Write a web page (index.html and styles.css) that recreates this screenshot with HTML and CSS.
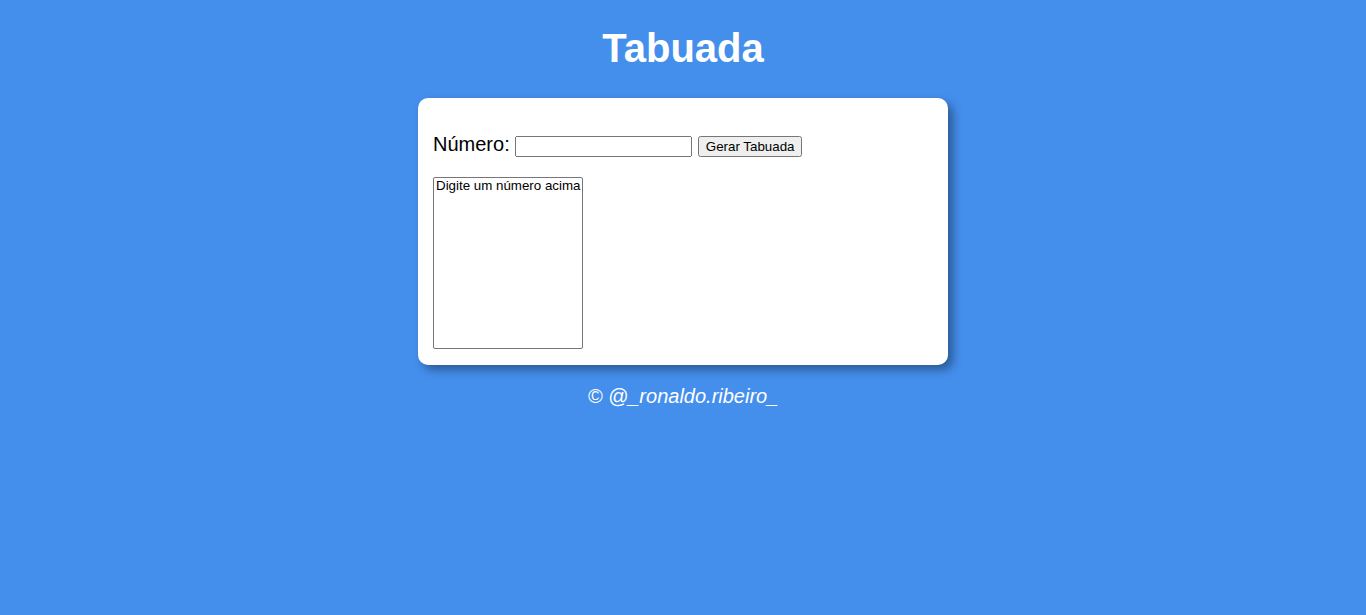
FILE: index.html
```html
<!DOCTYPE html>
<html lang="pt-br">
<head>
<meta charset="UTF-8">
<title>Tabuada</title>
<link rel="stylesheet" href="styles.css">
</head>
<body>
<header>
<h1 class="title">Tabuada</h1>
</header>
<section>
<div>
<p>Número: <input type="number" name="txtn" id="txtn" class="num"> <input type="button" value="Gerar Tabuada" class="btn"></p>
</div>
<div>
<select name="tabuada" id="seltab" size="10" class="tab">
<option>Digite um número acima</option>
</select>
</div>
</section>
<footer>
<p>&copy; @_ronaldo.ribeiro_</p>
</footer>
</body>
</html>
```
FILE: styles.css
```css
body {
  background: rgb(68, 142, 236);
  font: normal 15pt "Liberation Sans", Arial, sans-serif;
}
header {
  color: white;
  text-align: center;
}
.title {
  margin-top: 18px;
}
section {
  background: white;
  border-radius: 10px;
  padding: 15px;
  width: 500px;
  margin: auto;
  box-shadow: 5px 5px 10px rgba(0, 0, 0, 0.363);
}
footer {
  color: white;
  text-align: center;
  font-style: italic;
}
.num, .btn, .tab {
  font-family: "Liberation Sans", Arial, sans-serif;
}
.num {
  width: 169px;
}
.tab {
  width: 150px;
}
```
